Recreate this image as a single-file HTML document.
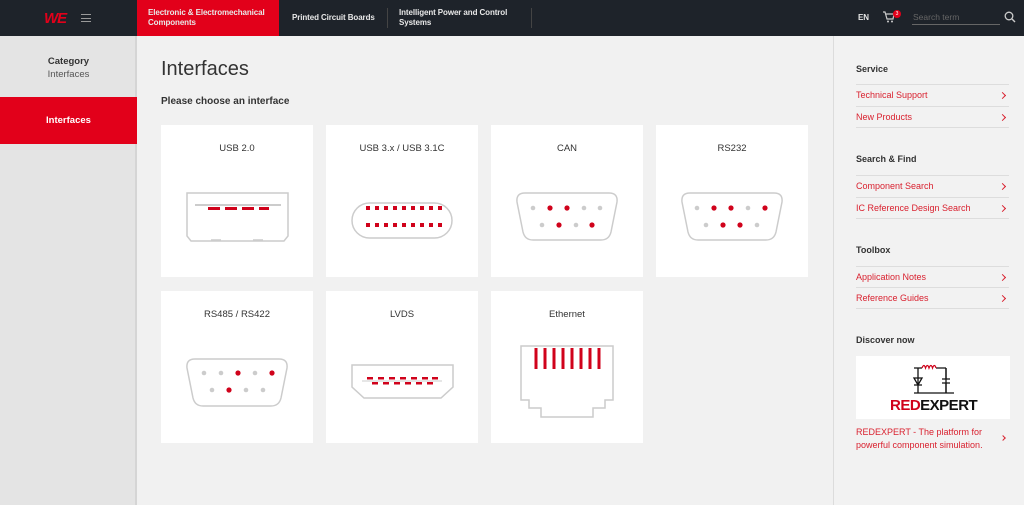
<!DOCTYPE html>
<html><head><meta charset="utf-8"><style>
*{margin:0;padding:0;box-sizing:border-box}
body{width:1024px;height:505px;overflow:hidden;background:#f1f1f1;font-family:"Liberation Sans",sans-serif;position:relative}
.a{position:absolute}
.hdr{left:0;top:0;width:1024px;height:36px;background:#1e232a}
.nav{font-size:8px;color:#e8e8e8;line-height:10px;font-weight:bold;letter-spacing:-0.1px}
.card{background:#fff;width:152px;height:152px}
.card .t{position:absolute;top:18px;width:100%;text-align:center;font-size:9.5px;color:#333}
.card svg{position:absolute;left:0;top:0}
.rs{left:833px;top:36px;width:191px;height:469px;background:#f2f2f2;border-left:1px solid #dcdcdc}
.h{font-size:9px;font-weight:bold;color:#333;position:absolute;left:22px}
.l{position:absolute;left:22px;width:153px;height:22px;border-top:1px solid #ddd;font-size:9px;color:#d9212f;line-height:21px}
.l:after{content:"";position:absolute;right:4px;top:8px;width:4px;height:4px;border-right:1.3px solid #d9212f;border-top:1.3px solid #d9212f;transform:rotate(45deg)}
</style></head><body>
<div class="a hdr"></div>
<div class="a" style="left:44px;top:10px;color:#e2001a;font-weight:bold;font-style:italic;font-size:15px;letter-spacing:-1px">WE</div>
<div class="a" style="left:81px;top:14px;width:10px;height:8px;border-top:1px solid #999;border-bottom:1px solid #999"><div style="margin-top:2.5px;border-top:1px solid #999"></div></div>
<div class="a" style="left:137px;top:0;width:142px;height:36px;background:#e2001a"></div>
<div class="a nav" style="left:148px;top:8px">Electronic &amp; Electromechanical<br>Components</div>
<div class="a nav" style="left:292px;top:13px">Printed Circuit Boards</div>
<div class="a" style="left:387px;top:8px;width:1px;height:20px;background:#444"></div>
<div class="a nav" style="left:399px;top:8px">Intelligent Power and Control<br>Systems</div>
<div class="a" style="left:531px;top:8px;width:1px;height:20px;background:#444"></div>
<div class="a nav" style="left:858px;top:13px">EN</div>
<svg class="a" style="left:882px;top:10px" width="14" height="14"><path d="M1 2h2l2 7h6l1-5H4" fill="none" stroke="#ccc" stroke-width="1.2"/><circle cx="6" cy="11.5" r="1" fill="#ccc"/><circle cx="10" cy="11.5" r="1" fill="#ccc"/></svg>
<div class="a" style="left:893px;top:10px;width:8px;height:8px;border-radius:4px;background:#e2001a;color:#fff;font-size:5px;text-align:center;line-height:8px">3</div>
<div class="a" style="left:913px;top:12px;font-size:8.5px;color:#666">Search term</div>
<div class="a" style="left:912px;top:24px;width:88px;height:1px;background:#666"></div>
<svg class="a" style="left:1004px;top:11px" width="12" height="12"><circle cx="5" cy="5" r="3.8" fill="none" stroke="#ccc" stroke-width="1.3"/><path d="M8 8l3 3" stroke="#ccc" stroke-width="1.4"/></svg>

<div class="a" style="left:0;top:36px;width:137px;height:469px;background:#e4e4e4;border-right:2px solid #d5d5d5"></div>
<div class="a" style="left:0;top:55px;width:137px;text-align:center;font-size:9.5px;color:#333;line-height:13px"><b>Category</b><br><span style="color:#555">Interfaces</span></div>
<div class="a" style="left:0;top:97px;width:137px;height:47px;background:#e2001a;color:#fff;font-weight:bold;font-size:9.5px;text-align:center;line-height:47px">Interfaces</div>

<div class="a" style="left:161px;top:58px;font-size:20px;color:#333">Interfaces</div>
<div class="a" style="left:161px;top:96px;font-size:10px;font-weight:bold;color:#333">Please choose an interface</div>

<div class="a card" style="left:161px;top:125px"><div class="t">USB 2.0</div>
<svg width="152" height="152"><path d="M26 68h101v43l-4 5H30l-4-5z" fill="none" stroke="#ccc" stroke-width="1.5"/><path d="M34 80h86" stroke="#ccc" stroke-width="2"/><g fill="#d0021b"><rect x="47" y="82" width="12" height="3"/><rect x="64" y="82" width="12" height="3"/><rect x="81" y="82" width="12" height="3"/><rect x="98" y="82" width="10" height="3"/></g><path d="M50 115h10M92 115h10" stroke="#ccc" stroke-width="1.5"/></svg></div>

<div class="a card" style="left:326px;top:125px"><div class="t">USB 3.x / USB 3.1C</div>
<svg width="152" height="152"><rect x="26" y="78" width="100" height="35" rx="17.5" fill="none" stroke="#ccc" stroke-width="1.5"/><g fill="#d0021b" id="r1"><rect x="40" y="81" width="4" height="4"/><rect x="49" y="81" width="4" height="4"/><rect x="58" y="81" width="4" height="4"/><rect x="67" y="81" width="4" height="4"/><rect x="76" y="81" width="4" height="4"/><rect x="85" y="81" width="4" height="4"/><rect x="94" y="81" width="4" height="4"/><rect x="103" y="81" width="4" height="4"/><rect x="112" y="81" width="4" height="4"/></g><use href="#r1" y="17"/></svg></div>

<div class="a card" style="left:491px;top:125px"><div class="t">CAN</div>
<svg width="152" height="152"><path d="M34 68h84q9 0 8 9l-6 30q-2 8-10 8H42q-8 0-10-8l-6-30q-1-9 8-9z" fill="none" stroke="#ccc" stroke-width="1.5"/><g fill="#ccc"><circle cx="42" cy="83" r="2.3"/><circle cx="93" cy="83" r="2.3"/><circle cx="109" cy="83" r="2.3"/><circle cx="51" cy="100" r="2.3"/><circle cx="85" cy="100" r="2.3"/></g><g fill="#d0021b"><circle cx="59" cy="83" r="2.6"/><circle cx="76" cy="83" r="2.6"/><circle cx="68" cy="100" r="2.6"/><circle cx="101" cy="100" r="2.6"/></g></svg></div>

<div class="a card" style="left:656px;top:125px"><div class="t">RS232</div>
<svg width="152" height="152"><path d="M34 68h84q9 0 8 9l-6 30q-2 8-10 8H42q-8 0-10-8l-6-30q-1-9 8-9z" fill="none" stroke="#ccc" stroke-width="1.5"/><g fill="#ccc"><circle cx="41" cy="83" r="2.3"/><circle cx="92" cy="83" r="2.3"/><circle cx="50" cy="100" r="2.3"/><circle cx="101" cy="100" r="2.3"/></g><g fill="#d0021b"><circle cx="58" cy="83" r="2.6"/><circle cx="75" cy="83" r="2.6"/><circle cx="109" cy="83" r="2.6"/><circle cx="67" cy="100" r="2.6"/><circle cx="84" cy="100" r="2.6"/></g></svg></div>

<div class="a card" style="left:161px;top:291px"><div class="t">RS485 / RS422</div>
<svg width="152" height="152"><path d="M34 68h84q9 0 8 9l-6 30q-2 8-10 8H42q-8 0-10-8l-6-30q-1-9 8-9z" fill="none" stroke="#ccc" stroke-width="1.5"/><g fill="#ccc"><circle cx="43" cy="82" r="2.3"/><circle cx="60" cy="82" r="2.3"/><circle cx="94" cy="82" r="2.3"/><circle cx="51" cy="99" r="2.3"/><circle cx="85" cy="99" r="2.3"/><circle cx="102" cy="99" r="2.3"/></g><g fill="#d0021b"><circle cx="77" cy="82" r="2.6"/><circle cx="111" cy="82" r="2.6"/><circle cx="68" cy="99" r="2.6"/></g></svg></div>

<div class="a card" style="left:326px;top:291px"><div class="t">LVDS</div>
<svg width="152" height="152"><path d="M26 74h101v22l-12 11H38L26 96z" fill="none" stroke="#ccc" stroke-width="1.5"/><path d="M36 90h80" stroke="#ccc" stroke-width="1"/><g fill="#d0021b"><rect x="41" y="86" width="6" height="2.5"/><rect x="52" y="86" width="6" height="2.5"/><rect x="63" y="86" width="6" height="2.5"/><rect x="74" y="86" width="6" height="2.5"/><rect x="85" y="86" width="6" height="2.5"/><rect x="96" y="86" width="6" height="2.5"/><rect x="106" y="86" width="6" height="2.5"/><rect x="46" y="91" width="6" height="2.5"/><rect x="57" y="91" width="6" height="2.5"/><rect x="68" y="91" width="6" height="2.5"/><rect x="79" y="91" width="6" height="2.5"/><rect x="90" y="91" width="6" height="2.5"/><rect x="101" y="91" width="6" height="2.5"/></g></svg></div>

<div class="a card" style="left:491px;top:291px"><div class="t">Ethernet</div>
<svg width="152" height="152"><path d="M30 55h92v54h-8v8h-12v9H50v-9H38v-8h-8z" fill="none" stroke="#ccc" stroke-width="1.5"/><g fill="#d0021b"><rect x="43.5" y="57" width="3" height="21"/><rect x="52.5" y="57" width="3" height="21"/><rect x="61.5" y="57" width="3" height="21"/><rect x="70.5" y="57" width="3" height="21"/><rect x="79.5" y="57" width="3" height="21"/><rect x="88.5" y="57" width="3" height="21"/><rect x="97.5" y="57" width="3" height="21"/><rect x="106.5" y="57" width="3" height="21"/></g></svg></div>

<div class="a rs">
<div class="h" style="top:28px">Service</div>
<div class="l" style="top:48px">Technical Support</div>
<div class="l" style="top:70px;border-bottom:1px solid #ddd">New Products</div>
<div class="h" style="top:118px">Search &amp; Find</div>
<div class="l" style="top:139px">Component Search</div>
<div class="l" style="top:161px;border-bottom:1px solid #ddd">IC Reference Design Search</div>
<div class="h" style="top:209px">Toolbox</div>
<div class="l" style="top:230px">Application Notes</div>
<div class="l" style="top:251px;border-bottom:1px solid #ddd">Reference Guides</div>
<div class="h" style="top:299px">Discover now</div>
<div class="a" style="left:22px;top:320px;width:154px;height:63px;background:#fff">
<svg class="a" style="left:48px;top:4px" width="60" height="36"><path d="M10 8h8M32 8h10M14 8v25h28V8M10 33h40" stroke="#111" stroke-width="1.3" fill="none"/><path d="M18 8q2-5 3.5 0q2-5 3.5 0q2-5 3.5 0q2-5 3.5 0" stroke="#d0021b" stroke-width="1.3" fill="none"/><path d="M10 18l4 7 4-7zM10 25h8M38 19h8M38 23h8M42 8v11M42 23v10" stroke="#111" stroke-width="1.3" fill="none"/></svg>
<div class="a" style="left:34px;top:41px;font-size:15px;font-weight:bold;letter-spacing:-0.5px"><span style="color:#d0021b">RED</span><span style="color:#111">EXPERT</span></div>
</div>
<div class="a" style="left:22px;top:390px;font-size:9px;color:#d9212f;line-height:13px">REDEXPERT - The platform for<br>powerful component simulation.</div>
<div class="a" style="left:167px;top:400px;width:4px;height:4px;border-right:1.3px solid #d9212f;border-top:1.3px solid #d9212f;transform:rotate(45deg)"></div>
</div>
</body></html>
